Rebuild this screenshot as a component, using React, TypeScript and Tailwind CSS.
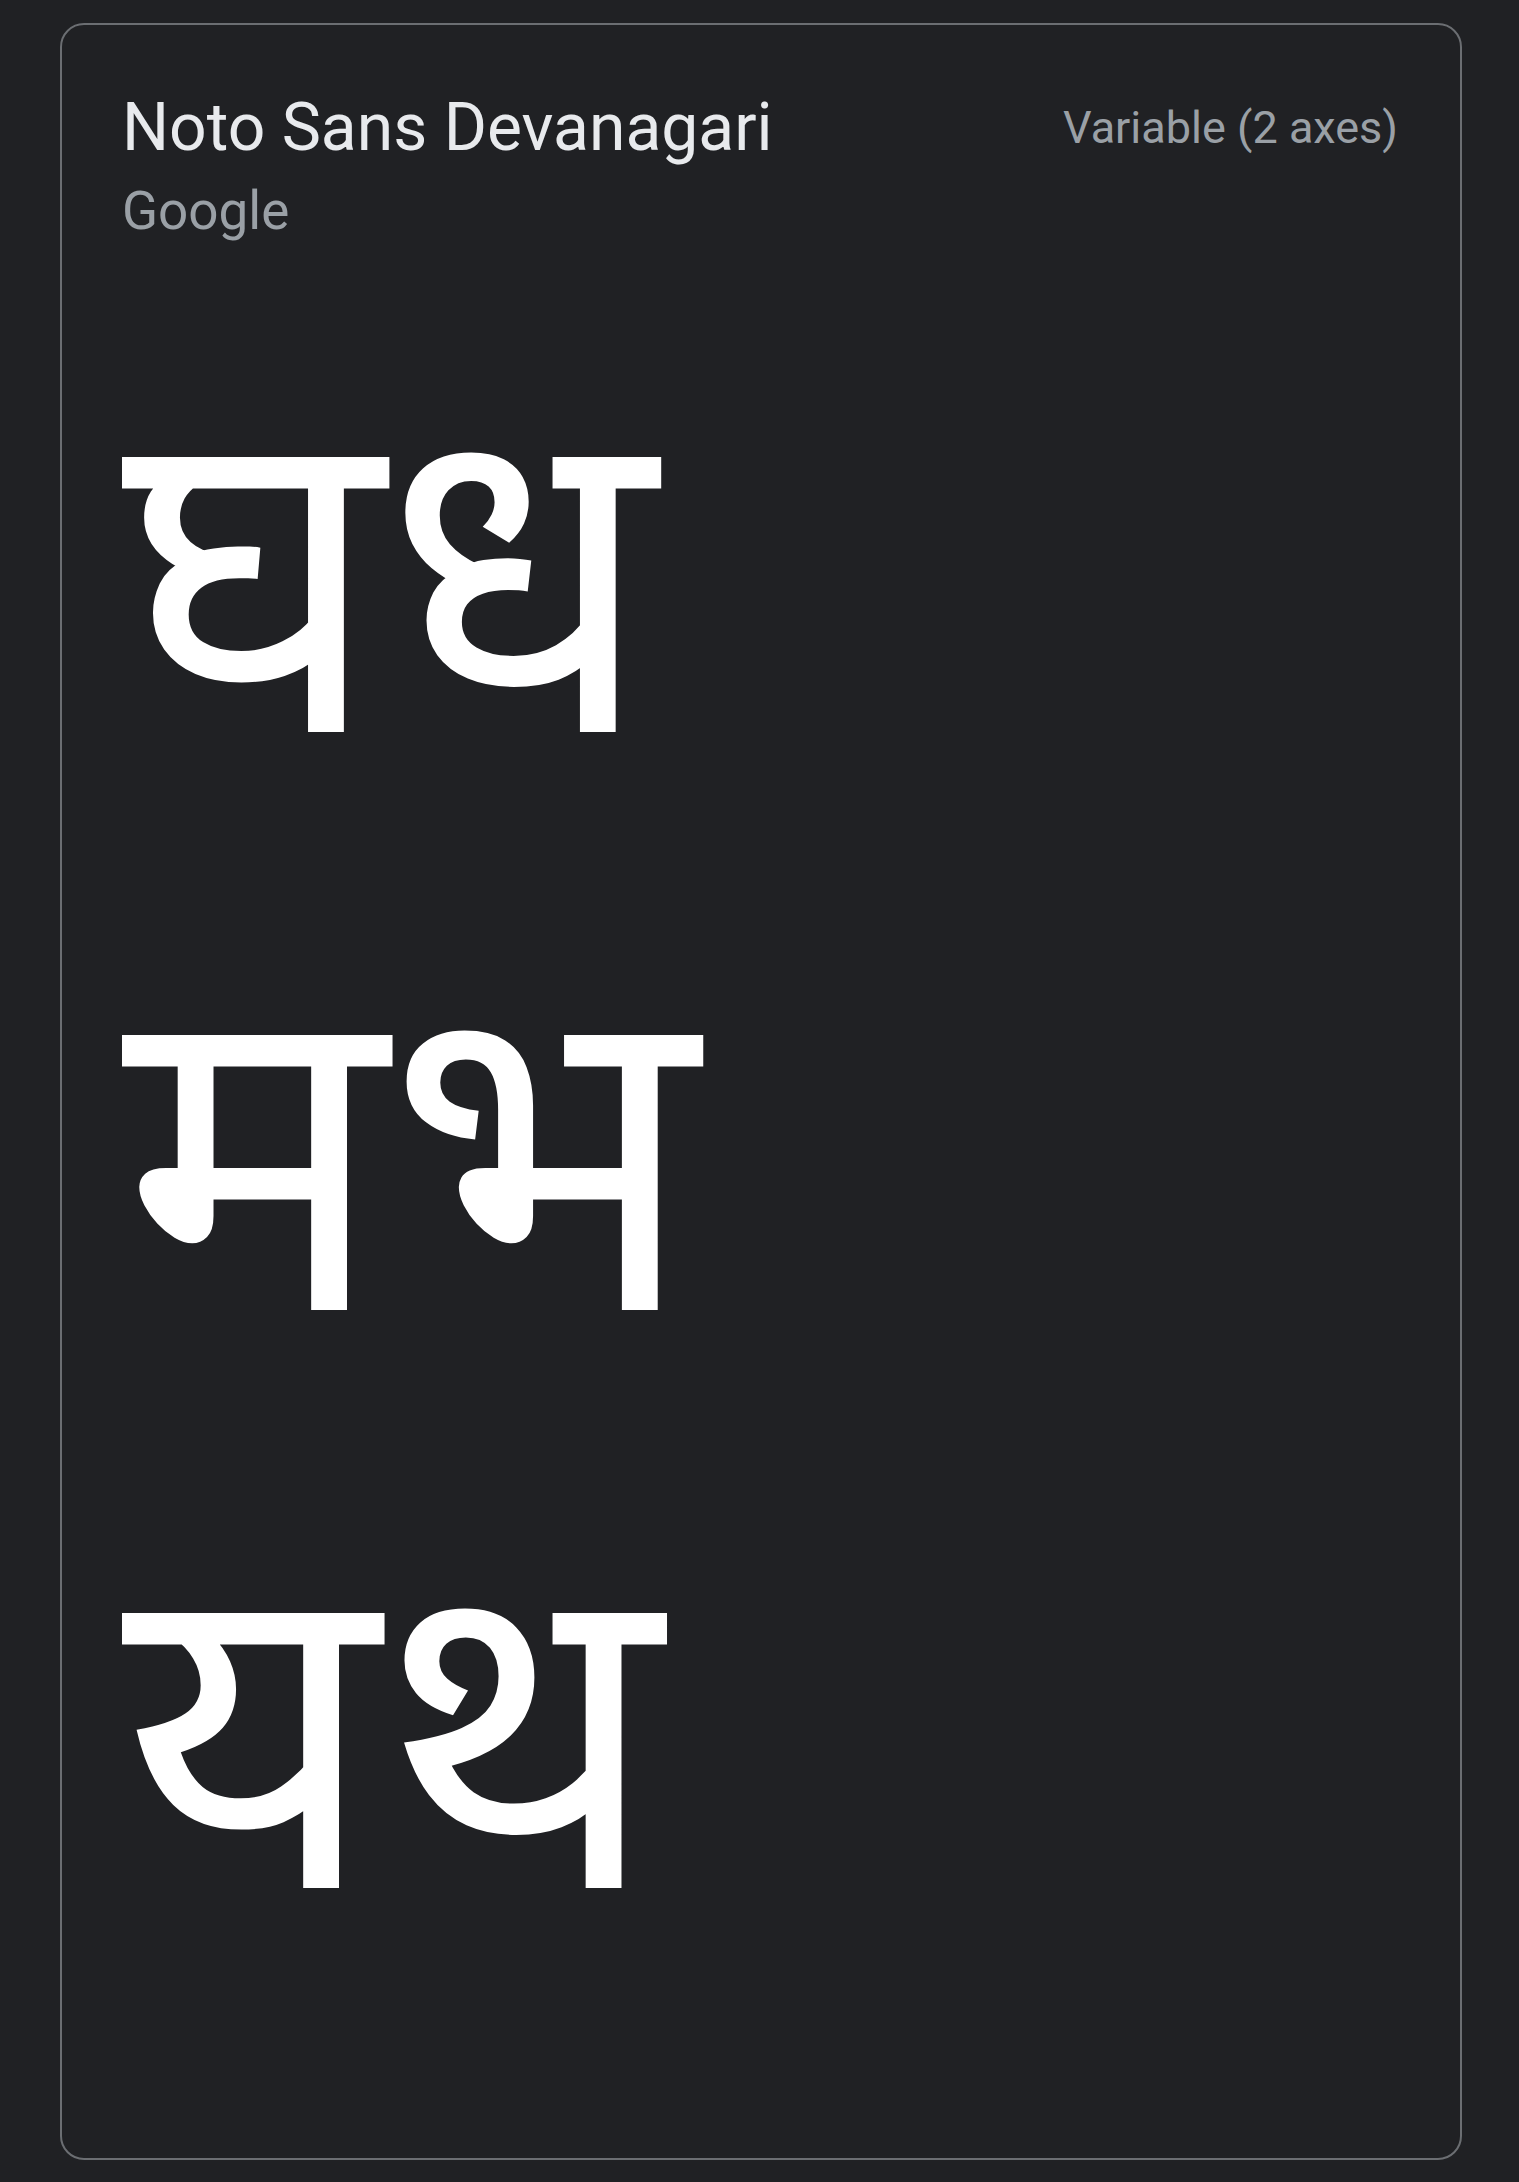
export default function App() {
    const rows = ['घध', 'मभ', 'यथ'];
    return (
        <div className="min-h-[2182px] bg-[#202124] pl-[60px] pr-[57px] pt-[23px] pb-[22px]" style={{ fontFamily: 'Roboto, "Noto Sans", sans-serif' }}>
            <div className="h-[2137px] rounded-[24px] border-2 border-[#6b6e72] pl-[60px] pr-[62px] pt-[63px] overflow-hidden">
                {/* Header */}
                <div className="flex items-start justify-between">
                    <div>
                        <div className="text-[66px] leading-[80px] text-[#e8eaed]">Noto Sans Devanagari</div>
                        <div className="text-[53px] leading-[86px] text-[#9aa0a6]">Google</div>
                    </div>
                    <div className="text-[45px] leading-[79px] text-[#9aa0a6]">Variable (2 axes)</div>
                </div>

                {/* Sample */}
                <div
                    className="mt-[81px] text-[442px] leading-[578px] text-white"
                    style={{ fontFamily: '"Noto Sans Devanagari", "Noto Sans", sans-serif' }}
                >
                    {rows.map((r) => (
                        <div key={r}>{r}</div>
                    ))}
                </div>
            </div>
        </div>
    );
}
